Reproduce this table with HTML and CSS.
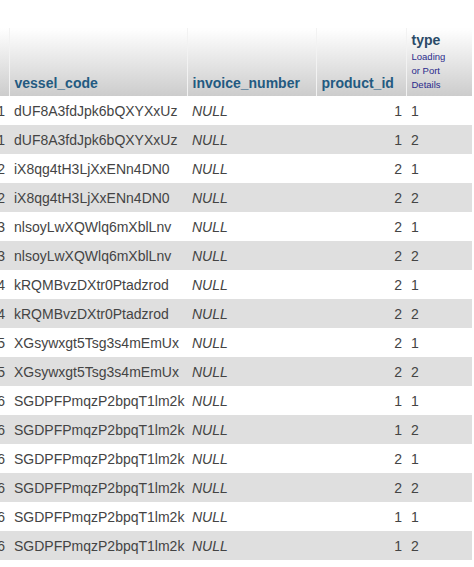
FILE: index.html
```html
<!DOCTYPE html>
<html>
<head>
<meta charset="utf-8">
<link rel="stylesheet" href="styles.css">
</head>
<body>
<table class="data">
<colgroup>
<col class="c-id"><col class="c-vessel"><col class="c-invoice"><col class="c-product"><col class="c-type">
</colgroup>
<thead>
<tr>
<th class="h-id"></th>
<th>vessel_code</th>
<th>invoice_number</th>
<th>product_id</th>
<th class="h-type"><span class="h-name">type</span><span class="comment">Loading<br>or Port<br>Details</span></th>
</tr>
</thead>
<tbody>
<tr><td class="num">1</td><td>dUF8A3fdJpk6bQXYXxUz</td><td class="null">NULL</td><td class="num">1</td><td>1</td></tr>
<tr><td class="num">1</td><td>dUF8A3fdJpk6bQXYXxUz</td><td class="null">NULL</td><td class="num">1</td><td>2</td></tr>
<tr><td class="num">2</td><td>iX8qg4tH3LjXxENn4DN0</td><td class="null">NULL</td><td class="num">2</td><td>1</td></tr>
<tr><td class="num">2</td><td>iX8qg4tH3LjXxENn4DN0</td><td class="null">NULL</td><td class="num">2</td><td>2</td></tr>
<tr><td class="num">3</td><td>nlsoyLwXQWlq6mXblLnv</td><td class="null">NULL</td><td class="num">2</td><td>1</td></tr>
<tr><td class="num">3</td><td>nlsoyLwXQWlq6mXblLnv</td><td class="null">NULL</td><td class="num">2</td><td>2</td></tr>
<tr><td class="num">4</td><td>kRQMBvzDXtr0Ptadzrod</td><td class="null">NULL</td><td class="num">2</td><td>1</td></tr>
<tr><td class="num">4</td><td>kRQMBvzDXtr0Ptadzrod</td><td class="null">NULL</td><td class="num">2</td><td>2</td></tr>
<tr><td class="num">5</td><td>XGsywxgt5Tsg3s4mEmUx</td><td class="null">NULL</td><td class="num">2</td><td>1</td></tr>
<tr><td class="num">5</td><td>XGsywxgt5Tsg3s4mEmUx</td><td class="null">NULL</td><td class="num">2</td><td>2</td></tr>
<tr><td class="num">6</td><td>SGDPFPmqzP2bpqT1lm2k</td><td class="null">NULL</td><td class="num">1</td><td>1</td></tr>
<tr><td class="num">6</td><td>SGDPFPmqzP2bpqT1lm2k</td><td class="null">NULL</td><td class="num">1</td><td>2</td></tr>
<tr><td class="num">6</td><td>SGDPFPmqzP2bpqT1lm2k</td><td class="null">NULL</td><td class="num">2</td><td>1</td></tr>
<tr><td class="num">6</td><td>SGDPFPmqzP2bpqT1lm2k</td><td class="null">NULL</td><td class="num">2</td><td>2</td></tr>
<tr><td class="num">6</td><td>SGDPFPmqzP2bpqT1lm2k</td><td class="null">NULL</td><td class="num">1</td><td>1</td></tr>
<tr><td class="num">6</td><td>SGDPFPmqzP2bpqT1lm2k</td><td class="null">NULL</td><td class="num">1</td><td>2</td></tr>
</tbody>
</table>
</body>
</html>
```
FILE: styles.css
```css
html, body {
  margin: 0;
  padding: 0;
  background: #fff;
}
body {
  padding-top: 28px;
  font-family: "Liberation Sans", Arial, sans-serif;
  overflow: hidden;
}
.data {
  border-collapse: collapse;
  table-layout: fixed;
  width: 493px;
  margin-left: -21px;
}
.c-id { width: 30px; }
.c-vessel { width: 178px; }
.c-invoice { width: 129px; }
.c-product { width: 90px; }
.c-type { width: 66px; }

.data th {
  height: 68px;
  padding: 0 4px 5px 5px;
  box-sizing: border-box;
  vertical-align: bottom;
  text-align: left;
  font-size: 14px;
  font-weight: bold;
  color: #235a81;
  background: linear-gradient(#ffffff, #cccccc);
  border-right: 1px solid #f2f2f2;
  line-height: 16px;
}
.data th.h-type {
  border-right: none;
  padding-bottom: 4px;
}
.h-name {
  display: block;
  font-size: 14px;
  color: #2a4a68;
  line-height: 18px;
  margin-bottom: 1px;
}
.comment {
  display: block;
  font-size: 9.5px;
  font-weight: normal;
  color: #2b2b8c;
  line-height: 14px;
}
.data td {
  height: 29px;
  padding: 0 4px 0 5px;
  box-sizing: border-box;
  font-size: 14px;
  color: #444;
  white-space: nowrap;
  overflow: hidden;
  vertical-align: middle;
}
.data tbody tr:nth-child(even) td {
  background: #dfdfdf;
}
.data td.num {
  text-align: right;
}
.data td.null {
  font-style: italic;
}
```
